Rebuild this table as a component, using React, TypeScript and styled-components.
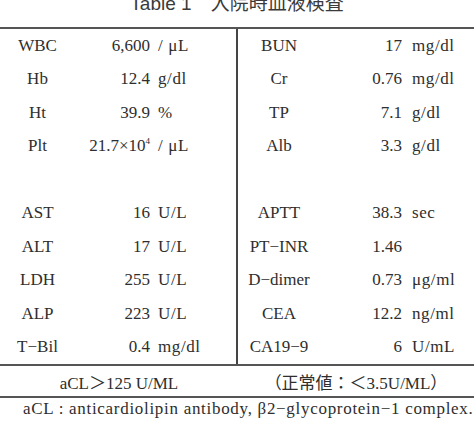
import styled, { createGlobalStyle } from "styled-components";

const GlobalStyle = createGlobalStyle`
  html, body {
    margin: 0;
    padding: 0;
    background: #ffffff;
    overflow: hidden;
  }
  body {
    font-family: "Liberation Serif", "Noto Sans CJK JP", serif;
    color: #2e2e2e;
  }
`;

const Page = styled.div`
  width: 474px;
`;

const Caption = styled.div`
  margin-top: -6px;
  height: 19px;
  margin-bottom: 14px;
  text-align: center;
  font-family: "Liberation Sans", "Noto Sans CJK JP", sans-serif;
  font-size: 19px;
  line-height: 19px;
  color: #3a3a3a;
  white-space: nowrap;
`;

const Table = styled.div`
  border-top: 2px solid #555;
  border-bottom: 2px solid #555;
`;

const Body = styled.div`
  display: grid;
  grid-template-columns: 238px 1fr;
  border-bottom: 2px solid #555;
`;

const Half = styled.div<{ $divider?: boolean }>`
  display: flex;
  flex-direction: column;
  border-right: ${(p) => (p.$divider ? "2px solid #444" : "none")};
`;

const Row = styled.div<{ $cols: string }>`
  display: grid;
  grid-template-columns: ${(p) => p.$cols};
  align-items: center;
  height: 33.5px;
  font-size: 17px;
  white-space: nowrap;
`;

const Label = styled.span`
  text-align: center;
`;

const Value = styled.span`
  text-align: right;
`;

const Unit = styled.span`
  text-align: left;
  letter-spacing: 0.6px;
`;

const Sup = styled.sup`
  font-size: 9px;
  vertical-align: 7px;
  line-height: 0;
`;

const SummaryRow = styled.div`
  display: grid;
  grid-template-columns: 238px 1fr;
  align-items: center;
  height: 30px;
  font-size: 17px;
  white-space: nowrap;
`;

const SummaryCell = styled.span`
  text-align: center;
`;

const Footnote = styled.div`
  padding-left: 23px;
  height: 22px;
  line-height: 22px;
  font-size: 17px;
  letter-spacing: 0.7px;
  white-space: nowrap;
`;

type Item = { label: string; value: React.ReactNode; unit: string } | null;

const leftItems: Item[] = [
  { label: "WBC", value: "6,600", unit: "/ μL" },
  { label: "Hb", value: "12.4", unit: "g/dl" },
  { label: "Ht", value: "39.9", unit: "%" },
  {
    label: "Plt",
    value: (
      <>
        21.7×10<Sup>4</Sup>
      </>
    ),
    unit: "/ μL",
  },
  null,
  { label: "AST", value: "16", unit: "U/L" },
  { label: "ALT", value: "17", unit: "U/L" },
  { label: "LDH", value: "255", unit: "U/L" },
  { label: "ALP", value: "223", unit: "U/L" },
  { label: "T−Bil", value: "0.4", unit: "mg/dl" },
];

const rightItems: Item[] = [
  { label: "BUN", value: "17", unit: "mg/dl" },
  { label: "Cr", value: "0.76", unit: "mg/dl" },
  { label: "TP", value: "7.1", unit: "g/dl" },
  { label: "Alb", value: "3.3", unit: "g/dl" },
  null,
  { label: "APTT", value: "38.3", unit: "sec" },
  { label: "PT−INR", value: "1.46", unit: "" },
  { label: "D−dimer", value: "0.73", unit: " μg/ml" },
  { label: "CEA", value: "12.2", unit: "ng/ml" },
  { label: "CA19−9", value: "6", unit: "U/mL" },
];

const LEFT_COLS = "75px 75px 8px 1fr";
const RIGHT_COLS = "82px 82px 10px 1fr";

const Column = ({ items, cols }: { items: Item[]; cols: string }) => (
  <>
    {items.map((it, i) =>
      it ? (
        <Row key={i} $cols={cols}>
          <Label>{it.label}</Label>
          <Value>{it.value}</Value>
          <span />
          <Unit>{it.unit}</Unit>
        </Row>
      ) : (
        <Row key={i} $cols={cols} />
      )
    )}
  </>
);

export default function App() {
  return (
    <Page>
      <GlobalStyle />
      <Caption>Table 1　入院時血液検査</Caption>
      <Table>
        <Body>
          <Half $divider>
            <Column items={leftItems} cols={LEFT_COLS} />
          </Half>
          <Half>
            <Column items={rightItems} cols={RIGHT_COLS} />
          </Half>
        </Body>
        <SummaryRow>
          <SummaryCell>aCL＞125 U/ML</SummaryCell>
          <SummaryCell>（正常値：＜3.5U/ML）</SummaryCell>
        </SummaryRow>
      </Table>
      <Footnote>aCL : anticardiolipin antibody, β2−glycoprotein−1 complex.</Footnote>
    </Page>
  );
}
